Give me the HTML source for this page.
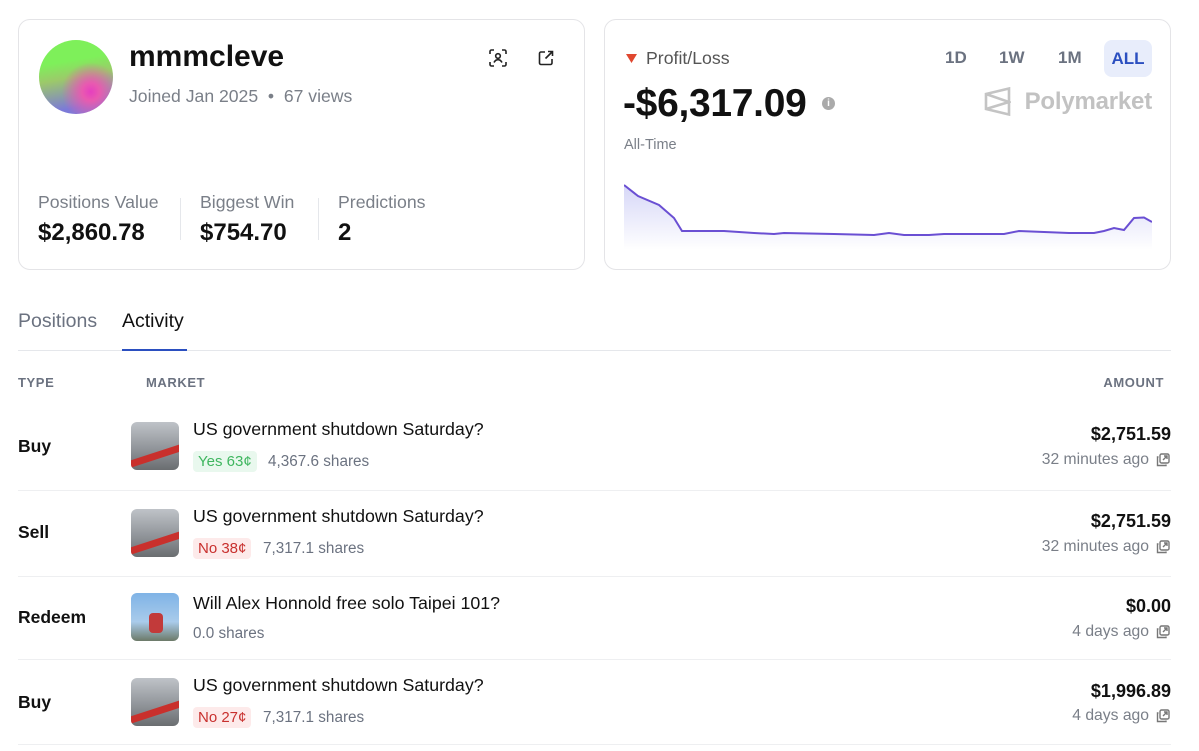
<!DOCTYPE html>
<html><head><meta charset="utf-8"><style>
*{margin:0;padding:0;box-sizing:border-box}
body{width:1199px;height:751px;background:#fff;font-family:"Liberation Sans",sans-serif;color:#111;position:relative;overflow:hidden}
.a{position:absolute;white-space:nowrap}
.card{position:absolute;border:1px solid #e4e4e7;border-radius:12px;background:#fff}
.g{color:#7a7f88}
.lbl{font-size:17.7px;color:#7a7f88}
.val{font-size:24px;font-weight:600;color:#111}
.vd{position:absolute;width:1px;background:#e5e7eb}
.th{font-size:13px;color:#6b7280;letter-spacing:.6px;font-weight:600}
.row{position:absolute;left:18px;width:1153px;height:1px;background:#eeeff1}
.thumb{position:absolute;left:131px;width:48px;height:48px;border-radius:6px;overflow:hidden}
.title{font-size:17.8px;color:#111}
.badge{position:absolute;font-size:15px;padding:2px 5px;border-radius:4px}
.yes{background:#e9f8ee;color:#3fb65f}
.no{background:#fdeaea;color:#c8302e}
.sh{font-size:15.3px;color:#6b7280}
.amt{font-size:18px;font-weight:700;right:28px}
.tm{font-size:15.7px;color:#7a7f88;right:50px}
.lk{position:absolute;right:29px;width:14px;height:14px}
</style></head><body>

<div class="card" style="left:18px;top:19px;width:567px;height:251px"></div>
<div class="a" style="left:39px;top:40px;width:74px;height:74px;border-radius:50%;background:radial-gradient(circle at 70% 70%,#e63fbf 0,#e85ab0 12%,rgba(200,90,180,0) 40%),linear-gradient(170deg,#7ef05a 30%,#9cc96a 50%,#7c7ad8 85%)"></div>
<div class="a" style="left:129px;top:40px;font-size:30px;font-weight:600">mmmcleve</div>
<div class="a g" style="left:129px;top:86px;font-size:17.6px">Joined Jan 2025 &nbsp;•&nbsp; 67 views</div>
<svg class="a" style="left:489px;top:49px" width="18" height="18" viewBox="0 0 18 18" fill="none" stroke="#222" stroke-width="1.6"><path d="M1 5V2.5A1.5 1.5 0 0 1 2.5 1H5M13 1h2.5A1.5 1.5 0 0 1 17 2.5V5M17 13v2.5a1.5 1.5 0 0 1-1.5 1.5H13M5 17H2.5A1.5 1.5 0 0 1 1 15.5V13"/><circle cx="9" cy="7" r="2.3"/><path d="M5 13.5c1-2 2.3-2.8 4-2.8s3 .8 4 2.8"/></svg>
<svg class="a" style="left:538px;top:50px" width="16" height="16" viewBox="0 0 16 16" fill="none" stroke="#222" stroke-width="1.6"><path d="M7 2H3a1.5 1.5 0 0 0-1.5 1.5v9.5A1.5 1.5 0 0 0 3 14.5h9.5A1.5 1.5 0 0 0 14 13V9M10 1.5h4.5V6M14.5 1.5L7.5 8.5"/></svg>

<div class="a lbl" style="left:38px;top:192px">Positions Value</div>
<div class="a val" style="left:38px;top:219px">$2,860.78</div>
<div class="vd" style="left:180px;top:198px;height:42px"></div>
<div class="a lbl" style="left:200px;top:192px">Biggest Win</div>
<div class="a val" style="left:200px;top:219px">$754.70</div>
<div class="vd" style="left:318px;top:198px;height:42px"></div>
<div class="a lbl" style="left:338px;top:192px">Predictions</div>
<div class="a val" style="left:338px;top:219px">2</div>

<div class="card" style="left:604px;top:19px;width:567px;height:251px"></div>
<svg class="a" style="left:626px;top:54px" width="11" height="9"><path d="M0 0h11L5.5 9z" fill="#e0472f"/></svg>
<div class="a lbl" style="left:646px;top:48px;color:#555">Profit/Loss</div>
<div class="a" style="left:945px;top:48px;font-size:17px;color:#6b7280;font-weight:600">1D</div>
<div class="a" style="left:999px;top:48px;font-size:17px;color:#6b7280;font-weight:600">1W</div>
<div class="a" style="left:1058px;top:48px;font-size:17px;color:#6b7280;font-weight:600">1M</div>
<div class="a" style="left:1104px;top:40px;width:48px;height:37px;border-radius:8px;background:#e8edfb;color:#2b4fc0;font-size:17px;font-weight:700;text-align:center;line-height:37px">ALL</div>
<div class="a" style="left:623px;top:82px;font-size:39px;font-weight:600;letter-spacing:-.3px">-$6,317.09</div>
<div class="a" style="left:822px;top:97px;width:13px;height:13px;border-radius:50%;background:#aaa;color:#fff;font-size:10px;text-align:center;line-height:13px;font-weight:700">i</div>
<svg class="a" style="left:984px;top:87px" width="27" height="29" viewBox="0 0 27 29" fill="none" stroke="#c4c4c4" stroke-width="2.6"><path d="M2 7L25 1.5V27.5L2 22Z M2 7L25 15L2 22"/></svg>
<div class="a" style="right:47px;top:88px;font-size:24px;font-weight:700;color:#c2c2c2;letter-spacing:-.2px">Polymarket</div>
<div class="a g" style="left:624px;top:137px;font-size:14.5px">All-Time</div>
<svg class="a" style="left:624px;top:180px" width="528" height="70" viewBox="0 0 528 70">
<defs><linearGradient id="f" x1="0" y1="0" x2="0" y2="1"><stop offset="0" stop-color="#5b5ee0" stop-opacity=".25"/><stop offset="1" stop-color="#5b5ee0" stop-opacity="0"/></linearGradient></defs>
<path d="M0 5L14 16L35 25L50 38L58 51L100 51L130 53L150 54L160 53L210 54L250 55L265 53L280 55L305 55L320 54L350 54L380 54L395 51L420 52L445 53L470 53L480 51L490 48L500 50L510 38L520 38L528 42V70H0Z" fill="url(#f)"/>
<path d="M0 5L14 16L35 25L50 38L58 51L100 51L130 53L150 54L160 53L210 54L250 55L265 53L280 55L305 55L320 54L350 54L380 54L395 51L420 52L445 53L470 53L480 51L490 48L500 50L510 38L520 37.5L528 42" fill="none" stroke="#6a4fd3" stroke-width="2"/>
</svg>

<div class="a" style="left:18px;top:310px;font-size:19.5px;color:#6b7280">Positions</div>
<div class="a" style="left:122px;top:310px;font-size:19.5px;color:#111">Activity</div>
<div class="a" style="left:18px;top:350px;width:1153px;height:1px;background:#e5e7eb"></div>
<div class="a" style="left:122px;top:349px;width:65px;height:2px;background:#2b4fc0"></div>

<div class="a th" style="left:18px;top:375px">TYPE</div>
<div class="a th" style="left:146px;top:375px">MARKET</div>
<div class="a th" style="right:35px;top:375px">AMOUNT</div>

<div class="a" style="left:18px;top:436px;font-size:17.5px;font-weight:600">Buy</div>
<div class="thumb" style="top:422px;background:linear-gradient(180deg,#bfc3c8,#8d9196 60%,#6a6d70)"><div style="position:absolute;left:-4px;top:30px;width:60px;height:7px;background:#c9302c;transform:rotate(-18deg)"></div></div>
<div class="a title" style="left:193px;top:419px">US government shutdown Saturday?</div>
<div class="badge yes" style="left:193px;top:451px">Yes 63¢</div>
<div class="a sh" style="left:268px;top:453px">4,367.6 shares</div>
<div class="a amt" style="top:424px">$2,751.59</div>
<div class="a tm" style="top:451px">32 minutes ago</div>
<div class="row" style="top:490px"></div>

<div class="a" style="left:18px;top:522px;font-size:17.5px;font-weight:600">Sell</div>
<div class="thumb" style="top:509px;background:linear-gradient(180deg,#bfc3c8,#8d9196 60%,#6a6d70)"><div style="position:absolute;left:-4px;top:30px;width:60px;height:7px;background:#c9302c;transform:rotate(-18deg)"></div></div>
<div class="a title" style="left:193px;top:506px">US government shutdown Saturday?</div>
<div class="badge no" style="left:193px;top:538px">No 38¢</div>
<div class="a sh" style="left:263px;top:540px">7,317.1 shares</div>
<div class="a amt" style="top:511px">$2,751.59</div>
<div class="a tm" style="top:538px">32 minutes ago</div>
<div class="row" style="top:576px"></div>

<div class="a" style="left:18px;top:607px;font-size:17.5px;font-weight:600">Redeem</div>
<div class="thumb" style="top:593px;background:linear-gradient(180deg,#7fb3e6,#a9cbeb 60%,#6c7a68)"><div style="position:absolute;left:18px;top:20px;width:14px;height:20px;background:#c23a3a;border-radius:4px"></div></div>
<div class="a title" style="left:193px;top:593px">Will Alex Honnold free solo Taipei 101?</div>
<div class="a sh" style="left:193px;top:625px">0.0 shares</div>
<div class="a amt" style="top:596px">$0.00</div>
<div class="a tm" style="top:623px">4 days ago</div>
<div class="row" style="top:659px"></div>

<div class="a" style="left:18px;top:692px;font-size:17.5px;font-weight:600">Buy</div>
<div class="thumb" style="top:678px;background:linear-gradient(180deg,#bfc3c8,#8d9196 60%,#6a6d70)"><div style="position:absolute;left:-4px;top:30px;width:60px;height:7px;background:#c9302c;transform:rotate(-18deg)"></div></div>
<div class="a title" style="left:193px;top:675px">US government shutdown Saturday?</div>
<div class="badge no" style="left:193px;top:707px">No 27¢</div>
<div class="a sh" style="left:263px;top:709px">7,317.1 shares</div>
<div class="a amt" style="top:681px">$1,996.89</div>
<div class="a tm" style="top:707px">4 days ago</div>
<div class="row" style="top:744px"></div>

<svg class="lk" style="top:453px" viewBox="0 0 14 14" fill="none" stroke="#777" stroke-width="1.4"><rect x="4" y="1" width="9" height="9" rx="1.5"/><path d="M2.5 4H1.5v8.5H10V11.5"/><path d="M7 7l4-4M8 3h3v3"/></svg>
<svg class="lk" style="top:540px" viewBox="0 0 14 14" fill="none" stroke="#777" stroke-width="1.4"><rect x="4" y="1" width="9" height="9" rx="1.5"/><path d="M2.5 4H1.5v8.5H10V11.5"/><path d="M7 7l4-4M8 3h3v3"/></svg>
<svg class="lk" style="top:625px" viewBox="0 0 14 14" fill="none" stroke="#777" stroke-width="1.4"><rect x="4" y="1" width="9" height="9" rx="1.5"/><path d="M2.5 4H1.5v8.5H10V11.5"/><path d="M7 7l4-4M8 3h3v3"/></svg>
<svg class="lk" style="top:709px" viewBox="0 0 14 14" fill="none" stroke="#777" stroke-width="1.4"><rect x="4" y="1" width="9" height="9" rx="1.5"/><path d="M2.5 4H1.5v8.5H10V11.5"/><path d="M7 7l4-4M8 3h3v3"/></svg>
</body></html>
